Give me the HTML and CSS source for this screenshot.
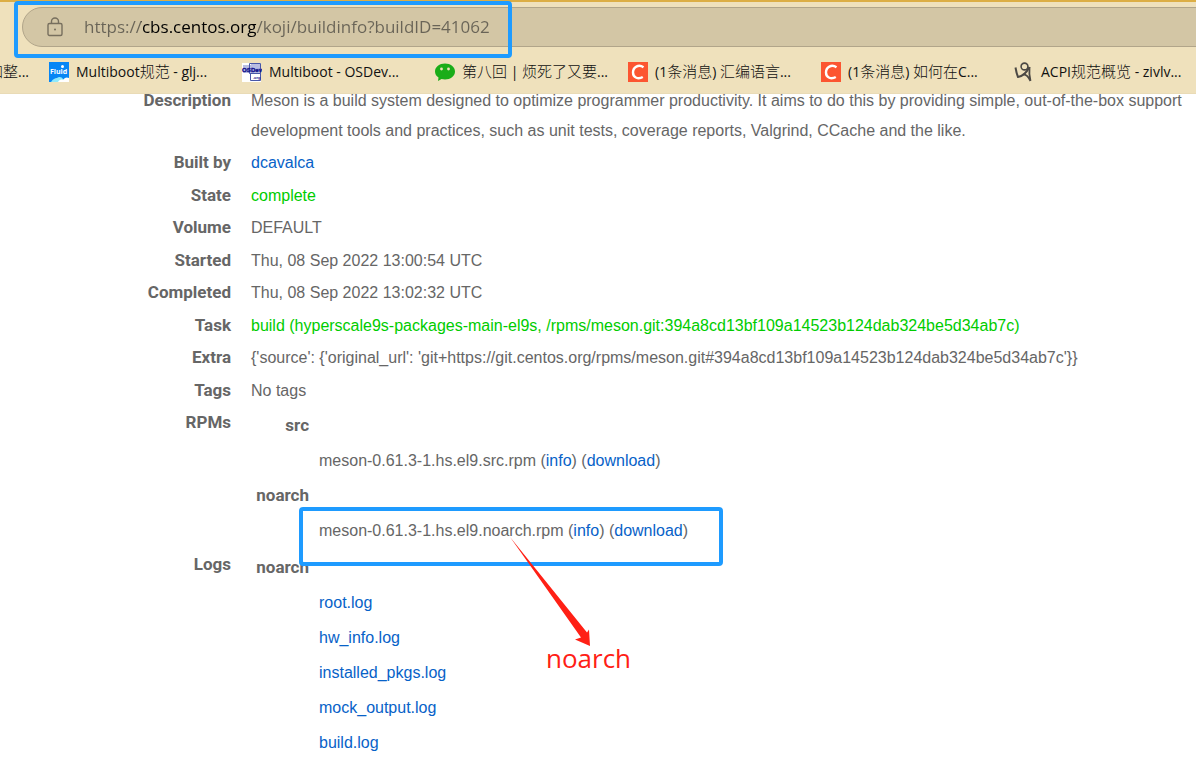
FILE: index.html
```html
<!DOCTYPE html>
<html lang="en">
<head>
<meta charset="utf-8">
<title>meson build info</title>
<link rel="stylesheet" href="styles.css">
</head>
<body>
<header class="browser">
  <form class="address">
    <svg class="lock" viewBox="0 0 16 20" fill="none" stroke="#776f5e" stroke-width="1.4">
      <rect x="1" y="6.5" width="14" height="12" rx="1.5"/>
      <path d="M4.500 6.500V4.500a3.500 3.500 0 0 1 7 0v2"/>
      <circle cx="8" cy="12.500" r="1" fill="#776f5e" stroke="none"/>
    </svg>
    <input class="url" type="text" aria-label="Address" value="https://cbs.centos.org/koji/buildinfo?buildID=41062">
  </form>
  <nav class="bookmarks">
    <a class="bookmark first" href="#"><span><span class="cjk">加整</span>...</span></a>
    <a class="bookmark" href="#">
      <svg class="icon" viewBox="0 0 20 20"><path fill="#0786f5" d="M0 0h20v20H0z"/><path fill="#8fe9fb" d="M2 20c2-3 4-4 6-4 2-2 5-1 6 1l6 3z"/><path fill="#fff" d="M9 20c1-2 3-3 5-2 2-3 4-3 6-2v4z"/><circle cx="13.500" cy="4.500" r="1.500" fill="#fff"/><text class="fluid" x="1" y="12">Fluid</text></svg>
      <span>Multiboot<span class="cjk">规范</span> - glj...</span></a>
    <a class="bookmark" href="#">
      <svg class="icon" viewBox="0 0 20 20"><path fill="#fff" d="M0 1h19v19H0z"/><path fill="#b9bde2" d="M1 3h9v8H1zM9 1h9v10H9z"/><path fill="none" stroke="#4857a8" d="M7.500 1.500h11v10h-11zM8.500 11.500h10v7h-10z"/><text class="osdev" x="0" y="10">OS</text><text class="osdev" x="9" y="10">Dev</text><text class="wiki" x="11" y="17">.org</text></svg>
      <span>Multiboot - OSDev...</span></a>
    <a class="bookmark" href="#">
      <svg class="icon" viewBox="0 0 20 20"><path fill="#1aad19" d="M10 1.500c5.500 0 10 3.500 10 8s-4.500 8-10 8c-1.300 0-2.500-.2-3.500-.5L3 19l.5-3.500C1.300 14 0 12 0 9.500c0-4.500 4.500-8 10-8z"/><circle cx="6.500" cy="7" r="1.400" fill="#efe1bc"/><circle cx="13.500" cy="7" r="1.400" fill="#efe1bc"/></svg>
      <span><span class="cjk">第八回</span> | <span class="cjk">烦死了又要</span>...</span></a>
    <a class="bookmark" href="#">
      <svg class="icon" viewBox="0 0 20 20"><path fill="#fc5531" d="M0 0h20v20H0z"/><path fill="none" stroke="#fff" stroke-width="2.400" d="M15.500 5.200C10.500 2 5 5 5 10.500c0 5.500 5.500 7 9.800 4.500"/></svg>
      <span>(1<span class="cjk">条消息</span>) <span class="cjk">汇编语言</span>...</span></a>
    <a class="bookmark" href="#">
      <svg class="icon" viewBox="0 0 20 20"><path fill="#fc5531" d="M0 0h20v20H0z"/><path fill="none" stroke="#fff" stroke-width="2.400" d="M15.500 5.200C10.500 2 5 5 5 10.500c0 5.500 5.500 7 9.800 4.500"/></svg>
      <span>(1<span class="cjk">条消息</span>) <span class="cjk">如何在</span>C...</span></a>
    <a class="bookmark" href="#">
      <svg class="icon" viewBox="0 0 20 20" fill="none" stroke="#4c4944"><circle cx="10.500" cy="4.500" r="3.400" stroke-width="1.600"/><path stroke-width="2" d="M1.500 5.500c.5 3 1 6 2.500 9.500 4-.5 8-3.500 11.500-10"/><path stroke-width="1.800" d="M9 12.500c3-.5 5 1.500 7.500 6.500M15.500 5c-.5 5 0 10 1 14"/></svg>
      <span>ACPI<span class="cjk">规范概览</span> - zivlv...</span></a>
  </nav>
</header>
<main class="page">
  <table class="info">
    <tr><th scope="row">Description</th><td>Meson is a build system designed to optimize programmer productivity. It aims to do this by providing simple, out-of-the-box support<br>development tools and practices, such as unit tests, coverage reports, Valgrind, CCache and the like.</td></tr>
    <tr><th scope="row">Built by</th><td><a href="#">dcavalca</a></td></tr>
    <tr><th scope="row">State</th><td class="done">complete</td></tr>
    <tr><th scope="row">Volume</th><td>DEFAULT</td></tr>
    <tr><th scope="row">Started</th><td>Thu, 08 Sep 2022 13:00:54 UTC</td></tr>
    <tr><th scope="row">Completed</th><td>Thu, 08 Sep 2022 13:02:32 UTC</td></tr>
    <tr><th scope="row">Task</th><td><a class="done" href="#">build (hyperscale9s-packages-main-el9s, /rpms/meson.git:394a8cd13bf109a14523b124dab324be5d34ab7c)</a></td></tr>
    <tr><th scope="row">Extra</th><td>{'source': {'original_url': 'git+https://git.centos.org/rpms/meson.git#394a8cd13bf109a14523b124dab324be5d34ab7c'}}</td></tr>
    <tr><th scope="row">Tags</th><td>No tags</td></tr>
    <tr><th scope="row">RPMs</th><td class="rpms">
      <table class="files">
        <tr><th scope="row">src</th><td></td></tr>
        <tr><td></td><td>meson-0.61.3-1.hs.el9.src.rpm (<a href="#">info</a>) (<a href="#">download</a>)</td></tr>
        <tr><th scope="row">noarch</th><td></td></tr>
        <tr><td></td><td>meson-0.61.3-1.hs.el9.noarch.rpm (<a href="#">info</a>) (<a href="#">download</a>)</td></tr>
      </table></td></tr>
    <tr><th scope="row">Logs</th><td>
      <table class="files">
        <tr><th scope="row">noarch</th><td></td></tr>
        <tr><td></td><td><a href="#">root.log</a></td></tr>
        <tr><td></td><td><a href="#">hw_info.log</a></td></tr>
        <tr><td></td><td><a href="#">installed_pkgs.log</a></td></tr>
        <tr><td></td><td><a href="#">mock_output.log</a></td></tr>
        <tr><td></td><td><a href="#">build.log</a></td></tr>
      </table></td></tr>
  </table>
</main>
<div class="mark mark-url"></div>
<div class="mark mark-rpm"></div>
<svg class="arrow" viewBox="0 0 84 112"><path fill="#ff2015" d="M0 0 77 95.500 79 92.500 80 109 65 102.500 71 100.500z"/></svg>
<p class="note">noarch</p>
</body>
</html>
```
FILE: styles.css
```css
* { box-sizing: border-box; }
body {
  margin: 0;
  height: 100vh;
  display: flex;
  flex-direction: column;
  position: relative;
  overflow: hidden;
  background: #fff;
  color: #666;
  font: 16px/30px "Liberation Sans", Arial, sans-serif;
}
a { color: #0762c8; text-decoration: none; }

.browser {
  flex: none;
  height: 94px;
  padding-top: 5px;
  overflow: hidden;
  border-top: 2px solid #dcae45;
  border-bottom: 1px solid #e9dbb6;
  background: #efe1bc;
  font-family: "Open Sans", "Noto Sans CJK SC", sans-serif;
}
.address {
  display: flex;
  align-items: center;
  gap: 21px;
  height: 40px;
  margin: 0 -2px 0 22px;
  padding-left: 24px;
  border: 1px solid #b1a58a;
  border-radius: 20px 0 0 20px;
  background: #d3c6a5;
}
.lock { width: 16px; height: 20px; }
.url {
  flex: 1;
  height: 36px;
  padding: 0 0 2px;
  border: 0;
  outline: 0;
  font: 17px "Open Sans", sans-serif;
  color: transparent;
  background: linear-gradient(90deg, #696457 57px, #000 57px 172px, #696457 172px);
  background-clip: text;
  -webkit-background-clip: text;
}
.bookmarks {
  display: flex;
  margin-left: -144px;
  padding-top: 10px;
}
.bookmark {
  flex: 0 0 193px;
  display: flex;
  align-items: center;
  gap: 7px;
  color: #111;
  font-size: 14px;
  white-space: nowrap;
}
.first { justify-content: flex-end; padding-right: 20px; }
.cjk { font-family: "Noto Sans CJK SC", sans-serif; font-size: 15px; font-weight: 300; line-height: 20px; }
.icon { flex: none; width: 20px; height: 20px; }
.fluid { font: bold 7px "Open Sans", sans-serif; fill: #fff; }
.osdev { font: bold 6px "Liberation Sans", sans-serif; fill: #14148c; stroke: #14148c; stroke-width: 0.4; }
.wiki { font: bold 4px "Liberation Sans", sans-serif; fill: #14148c; }

.page { flex: 1; min-height: 0; overflow: hidden; }
.info { margin-top: -8px; }
table { border-collapse: collapse; }
th, td { padding: 0; vertical-align: top; white-space: nowrap; text-align: left; }
th { text-align: right; font: bold 17px/28px Roboto, sans-serif; }
.info > tbody > tr > th { width: 231px; }
.info > tbody > tr > td { padding-left: 20px; }
.info > tbody > tr { height: 32px; }
.info > tbody > tr:first-child { height: 62px; }
.info > tbody > tr:nth-child(even) { height: 33px; }
.done { color: #0c0; }
.info .rpms { padding-bottom: 2px; }
.files tr { height: 35px; }
.files th, .files td { line-height: 35px; }
.files th { width: 58px; }
.files td + td, .files th + td { padding-left: 10px; }

.mark { position: absolute; border: 4px solid #1e9bff; border-radius: 4px; }
.mark-url { left: 14px; top: 1px; width: 498px; height: 57px; }
.mark-rpm { left: 299px; top: 507px; width: 424px; height: 59px; }
.arrow { position: absolute; left: 510px; top: 537px; width: 84px; height: 112px; }
.note {
  position: absolute;
  left: 546px;
  top: 640px;
  margin: 0;
  color: #ff2015;
  font: 26px/36px "Open Sans", sans-serif;
}
```
